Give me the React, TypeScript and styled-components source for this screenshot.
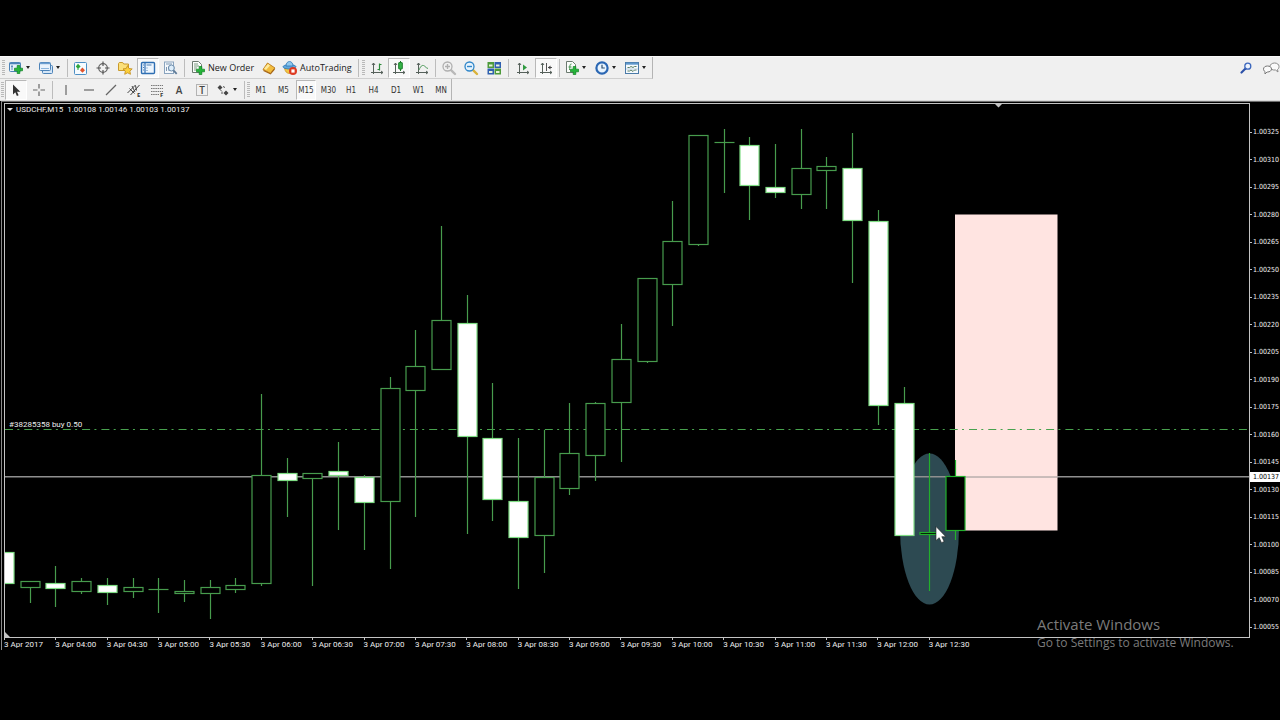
import React from "react";
import styled, { createGlobalStyle, css } from "styled-components";

const GlobalStyle = createGlobalStyle`
  *, *::before, *::after { box-sizing: border-box; }
  body { margin: 0; background: #000; }
  button { font: inherit; }
`;

const chartFont = `Roboto, "Liberation Sans", sans-serif`;
const condensedFont = `"DejaVu Sans Condensed", "DejaVu Sans", sans-serif`;
const uiFont = `"Open Sans", "Noto Sans", sans-serif`;

/* ---------- layout ---------- */

const Screen = styled.main`
  position: relative;
  min-height: 100vh;
  padding-top: 56px;
  background: #000;
  overflow: hidden;
  font-family: ${uiFont};
`;

const ToolbarArea = styled.header`
  display: flex;
  justify-content: space-between;
  background: #f0f0f0;
  border-top: 1px solid #fafafa;
  border-bottom: 1px solid #d8d8d8;
`;

const Toolbars = styled.div`
  display: flex;
  flex-direction: column;
  align-items: flex-start;
`;

const Toolbar = styled.div`
  display: flex;
  align-items: center;
  height: 21px;
  border-right: 1px solid #b4b4b4;

  &:first-child {
    height: 22px;
    padding-left: 1px;
    border-bottom: 1px solid #cfcfcf;
  }
`;

const Grip = styled.span`
  width: 3px;
  height: 16px;
  margin: 0 1px;
  background: repeating-linear-gradient(#b9b9b9 0 1px, #f0f0f0 1px 2px);
`;

const Separator = styled.span<{ $gap?: number }>`
  width: 1px;
  height: 18px;
  margin: 0 ${(p) => p.$gap ?? 1}px;
  background: #bcbcbc;
`;

const Group = styled.div<{ $width: number }>`
  display: flex;
  justify-content: space-between;
  width: ${(p) => p.$width}px;
`;

const ToolButton = styled.button<{ $pressed?: boolean; $narrow?: boolean }>`
  display: flex;
  align-items: center;
  justify-content: center;
  width: ${(p) => (p.$narrow ? 20 : 22)}px;
  height: 20px;
  padding: 0;
  border: 1px solid transparent;
  background: transparent;
  color: #333;
  ${(p) =>
    p.$pressed &&
    css`
      border-color: #b8b8b8 #fff #fff #b8b8b8;
      background: #f9f9f9;
    `}
`;

const MenuButton = styled.button`
  display: flex;
  align-items: center;
  gap: 2px;
  height: 20px;
  width: 30px;
  padding: 0 2px;
  border: 0;
  background: transparent;
`;

const TextButton = styled.button`
  display: flex;
  align-items: center;
  gap: 2px;
  height: 20px;
  padding: 0 4px 0 2px;
  border: 0;
  background: transparent;
  color: #222;
  font-size: 9px;
  line-height: 12px;
  white-space: nowrap;
`;

const PeriodButton = styled(ToolButton)`
  padding-top: 2px;
  font-family: ${condensedFont};
  font-size: 8px;
  line-height: 10px;
`;

const Caret = styled.span`
  flex: none;
  border: 2px solid transparent;
  border-top: 3px solid #222;
  border-bottom: 0;
`;

const Corner = styled.div`
  display: flex;
  align-items: center;
  gap: 3px;
  height: 22px;
  flex: none;
  margin-right: -2px;
`;

const ChartWindow = styled.section`
  display: flex;
  margin-left: 1px;
  padding: 1px 0 0 2px;
  border-top: 1px solid #6e6e6e;
  border-left: 1px solid #8a8a8a;
`;

const PlotColumn = styled.div`
  flex: 1;
  min-width: 0;
`;

const Plot = styled.div`
  position: relative;
  border: 1px solid #c4c4c4;
`;

const Canvas = styled.svg`
  display: block;
  width: 100%;
  height: 533px;
`;

const Legend = styled.div`
  position: absolute;
  top: 0;
  left: 2px;
  display: flex;
  align-items: center;
  gap: 3px;
  color: #ededed;
  font: 8px/11px ${chartFont};
  white-space: pre;
`;

const LegendArrow = styled.span`
  border: 3px solid transparent;
  border-top: 3px solid #e6e6e6;
  border-bottom: 0;
`;

const OrderLabel = styled.div`
  position: absolute;
  top: 315px;
  left: 4px;
  color: #ededed;
  font: 8px/11px ${chartFont};
`;

const TimeAxis = styled.div`
  display: grid;
  grid-template-columns: repeat(19, 1fr);
  width: 976px;
  height: 12px;
`;

const TimeLabel = styled.span`
  color: #ededed;
  font: 8px/10px ${chartFont};
  white-space: nowrap;

  &::before {
    content: "";
    display: block;
    width: 1px;
    height: 2px;
    background: #c4c4c4;
  }
`;

const PriceAxis = styled.aside`
  position: relative;
  display: flex;
  flex-direction: column;
  justify-content: space-between;
  flex: none;
  width: 30px;
  height: 535px;
  padding: 24px 0 6px;
`;

const PriceLabel = styled.span`
  display: flex;
  align-items: center;
  gap: 1px;
  color: #f2f2f2;
  font: 7px/10px ${condensedFont};

  &::before {
    content: "";
    flex: none;
    width: 2px;
    height: 1px;
    background: #c4c4c4;
  }
`;

const CurrentPrice = styled.span`
  position: absolute;
  top: 369px;
  left: 0;
  width: 100%;
  padding-left: 3px;
  background: #fff;
  color: #000;
  font: 7px/10px ${condensedFont};
`;

const Watermark = styled.div`
  position: absolute;
  top: 614px;
  right: 53px;
  width: 190px;
  color: #7b7b7b;
  white-space: nowrap;
`;

const WatermarkTitle = styled.p`
  margin: 0;
  font-size: 15px;
  line-height: 21px;
`;

const WatermarkText = styled.p`
  margin: 0;
  font-size: 12px;
  line-height: 16px;
`;

/* ---------- icons ---------- */

const Svg = styled.svg`
  flex: none;
  display: block;
`;

const Icon = ({ children, w = 16 }: { children: React.ReactNode; w?: number }) => (
  <Svg width={w} height="16" viewBox={`0 0 ${w} 16`} fill="none" aria-hidden="true">
    {children}
  </Svg>
);

const Plus = ({ x, y }: { x: number; y: number }) => (
  <path
    transform={`translate(${x} ${y})`}
    d="M2.7 0h2.6v2.7H8v2.6H5.3V8H2.7V5.3H0V2.7h2.7z"
    fill="#25b53a"
    stroke="#0d8420"
    strokeWidth=".7"
  />
);

const NewChartIcon = () => (
  <Icon>
    <rect x="1.5" y="2.5" width="11" height="9" rx="1" fill="#e7f1fb" stroke="#4d83b8" />
    <path d="M1.5 3.5h11" stroke="#4d83b8" strokeWidth="1.6" />
    <path d="M4 5v5M3 6.5h2" stroke="#5f8fbd" />
    <Plus x={6.5} y={5.5} />
  </Icon>
);

const ProfilesIcon = () => (
  <Icon>
    <rect x="4.5" y="5.5" width="10" height="8" rx="1" fill="#d4e6f7" stroke="#4d83b8" />
    <rect x="1.5" y="2.5" width="11" height="8" rx="1" fill="#eaf3fc" stroke="#4d83b8" />
    <path d="M2 3.4h10" stroke="#6d9fd0" strokeWidth="1.6" />
    <path d="M3 8.5h8" stroke="#8db5dc" />
  </Icon>
);

const MarketWatchIcon = () => (
  <Icon>
    <rect x="2.5" y="2.5" width="12" height="12" rx="1" fill="#f6fbff" stroke="#4d8fc4" />
    <path d="M6 3.8 8.6 6.4 6 9 3.8 6.4z" fill="#2fa63d" />
    <path d="M10.4 7.6 13 10.2l-2.6 2.6-2.4-2.6z" fill="#e2532b" />
    <path d="M6 8.5v1.5" stroke="#2fa63d" />
  </Icon>
);

const TargetIcon = () => (
  <Icon>
    <circle cx="8" cy="8" r="4.3" stroke="#666" strokeWidth="1.2" />
    <path d="M8 1.5V6M8 10v4.5M1.5 8H6M10 8h4.5" stroke="#555" strokeWidth="1.2" />
  </Icon>
);

const FolderStarIcon = () => (
  <Icon>
    <path d="M1.5 10.5v-7l.8-1h3.4l1 1.5h4.8v6.5z" fill="#fbe07a" stroke="#c99a2c" />
    <path
      d="m10.6 5.6 1.4 2.9 3.2.4-2.3 2.2.6 3.2-2.9-1.5-2.9 1.5.6-3.2L6 8.9l3.2-.4z"
      fill="#fcd03c"
      stroke="#c28b1c"
      strokeWidth=".8"
    />
  </Icon>
);

const TerminalIcon = () => (
  <Icon>
    <rect x="1.5" y="2.5" width="13" height="11" rx="1" fill="#eef6fe" stroke="#2f6fb3" strokeWidth="1.4" />
    <path d="M5 3v10" stroke="#2f6fb3" strokeWidth="1.2" />
    <path d="M6.5 5h5M6.5 8h1M6.5 10.5h1M3 5h1M3 7.5h1M3 10h1" stroke="#4f7fb2" />
  </Icon>
);

const TesterIcon = () => (
  <Icon>
    <rect x="2.5" y="2" width="9" height="11.5" fill="#f4f8fc" stroke="#8aa4be" />
    <path d="M4 4h6M4.5 11V7M7 11V6" stroke="#7f98b2" />
    <circle cx="9.4" cy="8" r="3" fill="#d8ebfa" fillOpacity=".8" stroke="#6b8cab" />
    <path d="m11.5 10.3 3.2 3.5" stroke="#5e7b98" strokeWidth="1.8" />
  </Icon>
);

const NewOrderIcon = () => (
  <Icon>
    <path d="M2.5 1.5h6l3 3v8h-9z" fill="#fbfdfb" stroke="#6c7a70" />
    <path d="M4 4h4M4 6h5M4 8h3M4 10h2" stroke="#7a9a80" />
    <Plus x={6.5} y={6.5} />
  </Icon>
);

const MetaEditorIcon = () => (
  <Icon>
    <path d="M2 9.5 6.5 3l7.5 5-4.500 5.500z" fill="#f2bd3e" stroke="#b9791a" strokeWidth=".9" />
    <path d="m3 8.500 4-4.500 2 1.500-4 4.500z" fill="#fdea9c" />
    <path d="m2.500 10.500 7 3.300 4-4.800" stroke="#a8681a" strokeWidth="1.2" />
  </Icon>
);

const AutoTradingIcon = () => (
  <Icon>
    <path d="M2.5 8c.5 3.5 2 5.5 5.5 5.5S13 11 13 8z" fill="#f3c544" stroke="#c7921f" strokeWidth=".7" />
    <ellipse cx="7.5" cy="6.8" rx="6.5" ry="2.2" fill="#5ea7dd" stroke="#2f77b5" strokeWidth=".8" />
    <path d="M4 6c0-6 7-6 7 0z" fill="#8ec7ee" stroke="#2f77b5" strokeWidth=".8" />
    <circle cx="11" cy="11" r="4" fill="#dd3a22" />
    <rect x="9.4" y="9.4" width="3.2" height="3.2" fill="#fff" />
  </Icon>
);

const Axes = () => <path d="M4.5 3v11M2 12.5h12M3 5l1.5-2L6 5M12 11l2 1.5-2 1.5" stroke="#55605a" />;

const BarsIcon = () => (
  <Icon>
    <Axes />
    <path d="M10.5 3.5v7M10.5 4.5h2M8.5 9.5h2" stroke="#2d8a3b" strokeWidth="1.2" />
  </Icon>
);

const CandlesIcon = () => (
  <Icon>
    <Axes />
    <path d="M9.5 1v10" stroke="#1e7c2c" />
    <rect x="7.7" y="2.5" width="3.6" height="6.5" rx=".5" fill="#35b548" stroke="#1e7c2c" />
  </Icon>
);

const LineChartIcon = () => (
  <Icon>
    <Axes />
    <path d="M5 10c2-5 4-5.5 6-3.5 1 1 1.6 1.5 3 2" stroke="#4d9a5a" />
  </Icon>
);

const ZoomIcon = ({ minus, ring, handle }: { minus?: boolean; ring: string; handle: string }) => (
  <Icon>
    <path d="m9.8 9.8 4.2 4.2" stroke={handle} strokeWidth="2.4" strokeLinecap="round" />
    <circle cx="6.5" cy="6.5" r="4.5" fill={minus ? "#e6f3fd" : "#f1f1f1"} stroke={ring} strokeWidth="1.3" />
    <path d={minus ? "M4 6.5h5" : "M4 6.5h5M6.5 4v5"} stroke={ring} strokeWidth="1.4" />
  </Icon>
);

const TileIcon = () => (
  <Icon>
    <rect x="1.5" y="2" width="6.5" height="6" fill="#4d9a3b" />
    <rect x="8.5" y="2" width="6.5" height="6" fill="#2f5fb0" />
    <rect x="1.5" y="8.5" width="6.5" height="6" fill="#2f5fb0" />
    <rect x="8.5" y="8.5" width="6.5" height="6" fill="#4d9a3b" />
    <path d="M3 5.5h3.5M10 5.5h3.5M3 12h3.5M10 12h3.5" stroke="#e8f4da" strokeWidth="2" />
  </Icon>
);

const AutoScrollIcon = () => (
  <Icon>
    <Axes />
    <path d="m8 4.500 4 3-4 3z" fill="#2f9a40" />
  </Icon>
);

const ShiftIcon = () => (
  <Icon>
    <Axes />
    <path d="M8.5 3v8M14 7.5h-4" stroke="#555" />
    <path d="m10 7.500 2.500-2v4z" fill="#444" />
  </Icon>
);

const IndicatorsIcon = () => (
  <Icon>
    <path d="M2.5 1.5h6l3 3v8h-9z" fill="#fafdfa" stroke="#6c7a70" />
    <path d="M7.5 4C5.5 4 6 6 5.5 10M4.5 7h3" stroke="#3f8f4a" />
    <Plus x={6.5} y={6.5} />
  </Icon>
);

const ClockIcon = () => (
  <Icon>
    <circle cx="8" cy="8" r="5.6" fill="#e9f4fe" stroke="#2b67b3" strokeWidth="2.2" />
    <path d="M8 4.800V8h2.800" stroke="#33506e" strokeWidth="1.2" />
  </Icon>
);

const TemplateIcon = () => (
  <Icon>
    <rect x="1.5" y="2.5" width="13" height="11" fill="#f5fafe" stroke="#4b7ba8" />
    <path d="M2 3.700h12" stroke="#5f98cc" strokeWidth="2" />
    <path d="M3.5 7.5h2l1.5-1 2 1 1.5-1h2M3.5 11h2l1.5-1 2 1.5 1.5-1.5h2" stroke="#5a7f62" />
    <path d="M2 9h12" stroke="#9bb6cf" strokeWidth=".6" />
  </Icon>
);

const ArrowIcon = () => (
  <Icon>
    <path d="M5 2.5v10l2.3-2.2 1.6 3.7 1.7-.8L9 9.7h3.3z" fill="#333" />
  </Icon>
);

const CrosshairIcon = () => (
  <Icon>
    <path d="M8 2v4.5M8 9.5V14M2 8h4.5M9.5 8H14" stroke="#666" strokeWidth="1.2" />
  </Icon>
);

const StrokeIcon = ({ d }: { d: string }) => (
  <Icon>
    <path d={d} stroke="#666" strokeWidth="1.2" />
  </Icon>
);

const IconLetter = styled.text`
  font: 700 6px ${uiFont};
  fill: #333;
`;

const ChannelIcon = () => (
  <Icon>
    <path d="m1.5 11 8-8M4.5 13l9-10M3.5 6.5l5 5M6 4l3 6M9.5 3.5l1 5" stroke="#444" />
    <IconLetter x="11" y="15">E</IconLetter>
  </Icon>
);

const FiboIcon = () => (
  <Icon>
    <path d="M2 3.5h12M2 6.5h12M2 9.5h12M2 12.5h8" stroke="#777" strokeDasharray="1.5 .7" />
    <IconLetter x="11" y="15">F</IconLetter>
  </Icon>
);

const Letter = styled.text`
  font: 600 10px ${uiFont};
  fill: #444;
  text-anchor: middle;
`;

const TextIcon = () => (
  <Icon>
    <Letter x="8" y="12">A</Letter>
  </Icon>
);

const TextLabelIcon = () => (
  <Icon>
    <rect x="2.5" y="2.5" width="11" height="11" stroke="#777" strokeDasharray="1 1" />
    <Letter x="8" y="12">T</Letter>
  </Icon>
);

const ArrowsIcon = () => (
  <Icon>
    <path d="m5 3 2.5 2.5L5 8 2.5 5.5zM11 8.5l2.5 2.5-2.5 2.5L8.500 11z" fill="#444" />
    <path d="M7 9.5 5.5 8M8 4.5l2 1M6 11h2" stroke="#555" />
  </Icon>
);

const SearchIcon = () => (
  <Icon>
    <path d="m7.5 8.500-4 4" stroke="#2b50a8" strokeWidth="2.2" strokeLinecap="round" />
    <circle cx="9.8" cy="6.2" r="3" fill="#eef4fd" stroke="#3b66bd" strokeWidth="1.3" />
  </Icon>
);

const ChatIcon = () => (
  <Icon w={18}>
    <path d="M8 6.5c0-2 2-3.5 4.6-3.5S17 4.5 17 6.5s-1 2.6-1.5 3l.5 2.5-2.5-2c-3 .4-5.5-1-5.5-3.5z" fill="#fafafa" stroke="#8a8a8a" />
    <path d="M1.5 9c0-1.8 1.8-3 4-3s4 1.2 4 3-1.8 3-4 3H5l-2 2v-2.5C2 11 1.500 10 1.500 9z" fill="#fafafa" stroke="#777" />
  </Icon>
);

/* ---------- data ---------- */

type Candle = { high: number; top: number; bottom: number; low: number; bear?: boolean; bright?: boolean };

const c = (high: number, top: number, bottom: number, low: number, bear = false, bright = false): Candle => ({
  high, top, bottom, low, bear, bright,
});

const candles: Candle[] = [
  c(552, 552, 583, 588, true),
  c(581, 581, 587, 603),
  c(566, 583, 588, 607, true),
  c(578, 581, 591, 594),
  c(578, 585, 592, 605, true),
  c(578, 587, 591, 598),
  c(578, 589, 589, 613),
  c(580, 591, 593, 602),
  c(580, 587, 593, 619),
  c(578, 585, 589, 593),
  c(394, 475, 583, 586),
  c(458, 473, 480, 517, true),
  c(473, 473, 478, 586),
  c(442, 471, 475, 530, true),
  c(475, 477, 502, 550, true),
  c(377, 388, 501, 569),
  c(330, 366, 390, 517),
  c(226, 320, 369, 369),
  c(295, 323, 436, 534, true),
  c(383, 438, 499, 521, true),
  c(438, 501, 537, 589, true),
  c(430, 477, 535, 573),
  c(403, 453, 488, 495),
  c(402, 403, 455, 481),
  c(324, 359, 402, 462),
  c(278, 278, 361, 363),
  c(201, 241, 284, 326),
  c(135, 135, 244, 246),
  c(129, 142, 142, 193),
  c(137, 145, 185, 220, true),
  c(144, 187, 192, 198, true),
  c(129, 168, 194, 209),
  c(157, 166, 170, 209),
  c(133, 168, 220, 283, true),
  c(210, 221, 405, 425, true),
  c(387, 403, 535, 535, true),
  c(453, 532, 534, 591, false, true),
  c(460, 476, 530, 540, false, true),
];

const BAR_STEP = 25.7;
const times = [
  "2017", "04:00", "04:30", "05:00", "05:30", "06:00", "06:30", "07:00", "07:30", "08:00",
  "08:30", "09:00", "09:30", "10:00", "10:30", "11:00", "11:30", "12:00", "12:30",
];
const prices = Array.from({ length: 19 }, (_, i) => (1.00325 - i * 0.00015).toFixed(5));
const periods = ["M1", "M5", "M15", "M30", "H1", "H4", "D1", "W1", "MN"];

const CandleMark = ({ candle, index }: { candle: Candle; index: number }) => {
  const x = Math.round(4 + index * BAR_STEP) + 0.5;
  const color = candle.bright ? "#22b02c" : "#479c4d";
  return (
    <g stroke={color} strokeWidth="1.2">
      <path d={`M${x} ${candle.high}V${candle.low}`} />
      {candle.top === candle.bottom ? (
        <path d={`M${x - 10} ${candle.top + 0.5}h20`} />
      ) : (
        <rect
          x={x - 9.5}
          y={candle.top + 0.5}
          width="19"
          height={candle.bottom - candle.top}
          fill={candle.bear ? "#fff" : "#000"}
          stroke={candle.bear ? "#7fdc84" : color}
        />
      )}
    </g>
  );
};

const Chart = () => (
  <Canvas role="img" aria-label="USDCHF 15 minute candles">
    <g transform="translate(-5 -104)">
      <ellipse cx="929.5" cy="529" rx="29.5" ry="75.5" fill="#2d4a52" />
      <rect x="955" y="214.5" width="102.5" height="316" fill="#ffe4e1" />
    </g>
    <path d="M0 325.500H4000" stroke="#48a24e" strokeDasharray="8 4.3 2 4.98" />
    <rect y="372" width="100%" height="1.5" fill="#8f8f8f" />
    <g transform="translate(-5 -104)">
      <path d="M965 476.800h92.500" stroke="#cbbcba" strokeWidth="1.6" />
      {candles.map((candle, i) => (
        <CandleMark key={i} candle={candle} index={i} />
      ))}
      <path d="M994.500 103.500h8l-4 4zM5 632l5 5H5z" fill="#c4c4c4" />
      <path
        d="M936 526.500v14l3.200-2.800 2.300 5 2.600-1.200-2.300-4.800h4z"
        fill="#fff"
        stroke="#222"
        strokeWidth=".6"
      />
    </g>
  </Canvas>
);

/* ---------- page ---------- */

export default function App() {
  return (
    <Screen>
      <GlobalStyle />
      <ToolbarArea>
        <Toolbars>
          <Toolbar role="toolbar" aria-label="Standard">
            <Grip />
            <MenuButton aria-label="New chart"><NewChartIcon /><Caret /></MenuButton>
            <MenuButton aria-label="Profiles"><ProfilesIcon /><Caret /></MenuButton>
            <Separator />
            <Group $width={112}>
              <ToolButton aria-label="Market watch"><MarketWatchIcon /></ToolButton>
              <ToolButton aria-label="Data window"><TargetIcon /></ToolButton>
              <ToolButton aria-label="Navigator"><FolderStarIcon /></ToolButton>
              <ToolButton aria-label="Terminal" $pressed><TerminalIcon /></ToolButton>
              <ToolButton aria-label="Strategy tester"><TesterIcon /></ToolButton>
            </Group>
            <Separator $gap={3} />
            <TextButton><NewOrderIcon />New Order</TextButton>
            <ToolButton aria-label="MetaEditor"><MetaEditorIcon /></ToolButton>
            <TextButton><AutoTradingIcon />AutoTrading</TextButton>
            <Separator $gap={2} />
            <Grip />
            <Group $width={67}>
              <ToolButton aria-label="Bar chart"><BarsIcon /></ToolButton>
              <ToolButton aria-label="Candlesticks" $pressed><CandlesIcon /></ToolButton>
              <ToolButton aria-label="Line chart"><LineChartIcon /></ToolButton>
            </Group>
            <Separator $gap={2} />
            <Group $width={67}>
              <ToolButton aria-label="Zoom in"><ZoomIcon ring="#b0b0b0" handle="#b8b8b8" /></ToolButton>
              <ToolButton aria-label="Zoom out"><ZoomIcon minus ring="#2f86c9" handle="#d9b23a" /></ToolButton>
              <ToolButton aria-label="Tile windows"><TileIcon /></ToolButton>
            </Group>
            <Separator $gap={3} />
            <Group $width={45}>
              <ToolButton aria-label="Auto scroll"><AutoScrollIcon /></ToolButton>
              <ToolButton aria-label="Chart shift" $pressed><ShiftIcon /></ToolButton>
            </Group>
            <Separator $gap={2} />
            <MenuButton aria-label="Indicators"><IndicatorsIcon /><Caret /></MenuButton>
            <MenuButton aria-label="Periods"><ClockIcon /><Caret /></MenuButton>
            <MenuButton aria-label="Templates"><TemplateIcon /><Caret /></MenuButton>
          </Toolbar>
          <Toolbar role="toolbar" aria-label="Line studies and timeframes">
            <Grip />
            <Group $width={45}>
              <ToolButton aria-label="Cursor" $pressed><ArrowIcon /></ToolButton>
              <ToolButton aria-label="Crosshair"><CrosshairIcon /></ToolButton>
            </Group>
            <Separator $gap={2} />
            <Group $width={158}>
              <ToolButton aria-label="Vertical line"><StrokeIcon d="M8 3v10" /></ToolButton>
              <ToolButton aria-label="Horizontal line"><StrokeIcon d="M3 8h10" /></ToolButton>
              <ToolButton aria-label="Trendline"><StrokeIcon d="M3 13 13 3" /></ToolButton>
              <ToolButton aria-label="Channel"><ChannelIcon /></ToolButton>
              <ToolButton aria-label="Fibonacci"><FiboIcon /></ToolButton>
              <ToolButton aria-label="Text"><TextIcon /></ToolButton>
              <ToolButton aria-label="Text label"><TextLabelIcon /></ToolButton>
            </Group>
            <MenuButton aria-label="Arrows"><ArrowsIcon /><Caret /></MenuButton>
            <Separator />
            <Grip />
            <Group $width={200}>
              {periods.map((p) => (
                <PeriodButton key={p} $narrow $pressed={p === "M15"}>{p}</PeriodButton>
              ))}
            </Group>
          </Toolbar>
        </Toolbars>
        <Corner>
          <ToolButton aria-label="Search"><SearchIcon /></ToolButton>
          <ToolButton aria-label="Chat"><ChatIcon /></ToolButton>
        </Corner>
      </ToolbarArea>

      <ChartWindow>
        <PlotColumn>
          <Plot>
            <Chart />
            <Legend>
              <LegendArrow />
              <span>USDCHF,M15  1.00108 1.00146 1.00103 1.00137</span>
            </Legend>
            <OrderLabel>#38285358 buy 0.50</OrderLabel>
          </Plot>
          <TimeAxis>
            {times.map((t) => (
              <TimeLabel key={t}>3 Apr {t}</TimeLabel>
            ))}
          </TimeAxis>
        </PlotColumn>
        <PriceAxis>
          {prices.map((p) => (
            <PriceLabel key={p}>{p}</PriceLabel>
          ))}
          <CurrentPrice>1.00137</CurrentPrice>
        </PriceAxis>
      </ChartWindow>

      <Watermark>
        <WatermarkTitle>Activate Windows</WatermarkTitle>
        <WatermarkText>Go to Settings to activate Windows.</WatermarkText>
      </Watermark>
    </Screen>
  );
}
